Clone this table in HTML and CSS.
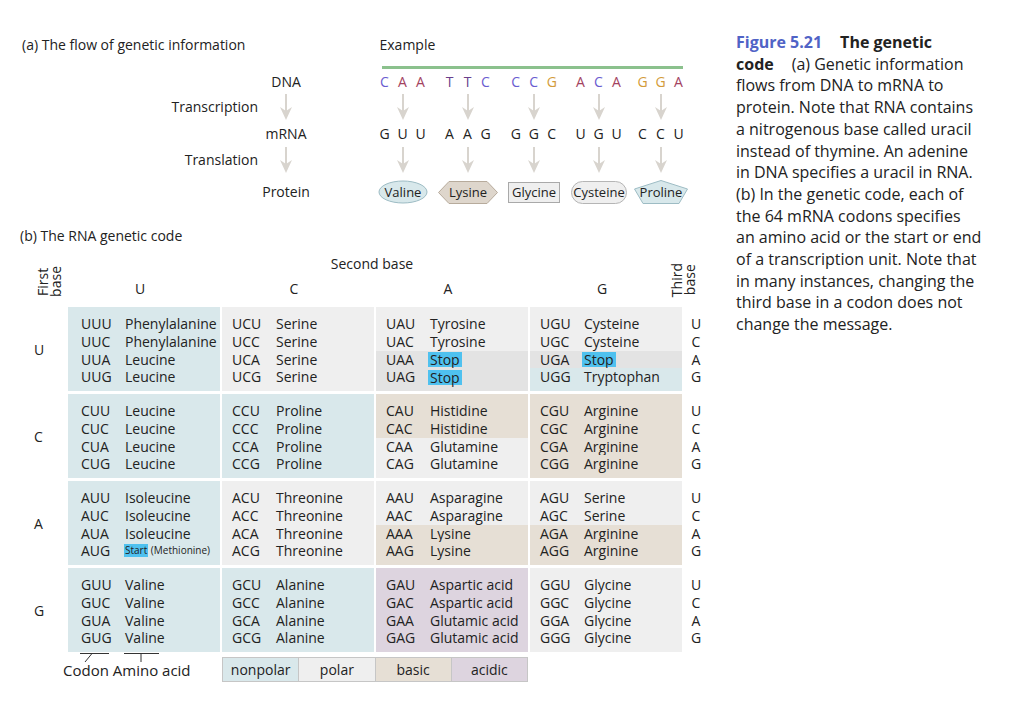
FILE: index.html
```html
<!DOCTYPE html>
<html lang="en">
<head>
<meta charset="utf-8">
<title>Figure 5.21 The genetic code</title>
<link rel="stylesheet" href="styles.css">
</head>
<body>
<div class="page">
  <div class="figure">
    <section class="flow">
      <div class="title-a">(a) The flow of genetic information</div>
      <div class="example-h">Example</div>

      <div class="sp3"></div>
      <div class="gline"></div>

      <div></div>
      <div class="nm">DNA</div>
      <div></div>
      <div class="cod"><span class="bC">C</span><span class="bA">A</span><span class="bA">A</span></div>
      <div class="cod"><span class="bT">T</span><span class="bT">T</span><span class="bC">C</span></div>
      <div class="cod"><span class="bC">C</span><span class="bC">C</span><span class="bG">G</span></div>
      <div class="cod"><span class="bA">A</span><span class="bC">C</span><span class="bA">A</span></div>
      <div class="cod"><span class="bG">G</span><span class="bG">G</span><span class="bA">A</span></div>

      <div class="lab">Transcription</div>
      <div class="arr"><svg width="14" height="26" viewBox="0 0 14 26"><path d="M7 0V18" stroke="#d8d4ce" stroke-width="2"/><path d="M1 13L7 26L13 13L7 17Z" fill="#d8d4ce"/></svg></div>
      <div></div>
      <div class="arr"><svg width="14" height="26" viewBox="0 0 14 26"><path d="M7 0V18" stroke="#d8d4ce" stroke-width="2"/><path d="M1 13L7 26L13 13L7 17Z" fill="#d8d4ce"/></svg></div>
      <div class="arr"><svg width="14" height="26" viewBox="0 0 14 26"><path d="M7 0V18" stroke="#d8d4ce" stroke-width="2"/><path d="M1 13L7 26L13 13L7 17Z" fill="#d8d4ce"/></svg></div>
      <div class="arr"><svg width="14" height="26" viewBox="0 0 14 26"><path d="M7 0V18" stroke="#d8d4ce" stroke-width="2"/><path d="M1 13L7 26L13 13L7 17Z" fill="#d8d4ce"/></svg></div>
      <div class="arr"><svg width="14" height="26" viewBox="0 0 14 26"><path d="M7 0V18" stroke="#d8d4ce" stroke-width="2"/><path d="M1 13L7 26L13 13L7 17Z" fill="#d8d4ce"/></svg></div>
      <div class="arr"><svg width="14" height="26" viewBox="0 0 14 26"><path d="M7 0V18" stroke="#d8d4ce" stroke-width="2"/><path d="M1 13L7 26L13 13L7 17Z" fill="#d8d4ce"/></svg></div>

      <div></div>
      <div class="nm">mRNA</div>
      <div></div>
      <div class="cod"><span>G</span><span>U</span><span>U</span></div>
      <div class="cod"><span>A</span><span>A</span><span>G</span></div>
      <div class="cod"><span>G</span><span>G</span><span>C</span></div>
      <div class="cod"><span>U</span><span>G</span><span>U</span></div>
      <div class="cod"><span>C</span><span>C</span><span>U</span></div>

      <div class="lab">Translation</div>
      <div class="arr"><svg width="14" height="26" viewBox="0 0 14 26"><path d="M7 0V18" stroke="#d8d4ce" stroke-width="2"/><path d="M1 13L7 26L13 13L7 17Z" fill="#d8d4ce"/></svg></div>
      <div></div>
      <div class="arr"><svg width="14" height="26" viewBox="0 0 14 26"><path d="M7 0V18" stroke="#d8d4ce" stroke-width="2"/><path d="M1 13L7 26L13 13L7 17Z" fill="#d8d4ce"/></svg></div>
      <div class="arr"><svg width="14" height="26" viewBox="0 0 14 26"><path d="M7 0V18" stroke="#d8d4ce" stroke-width="2"/><path d="M1 13L7 26L13 13L7 17Z" fill="#d8d4ce"/></svg></div>
      <div class="arr"><svg width="14" height="26" viewBox="0 0 14 26"><path d="M7 0V18" stroke="#d8d4ce" stroke-width="2"/><path d="M1 13L7 26L13 13L7 17Z" fill="#d8d4ce"/></svg></div>
      <div class="arr"><svg width="14" height="26" viewBox="0 0 14 26"><path d="M7 0V18" stroke="#d8d4ce" stroke-width="2"/><path d="M1 13L7 26L13 13L7 17Z" fill="#d8d4ce"/></svg></div>
      <div class="arr"><svg width="14" height="26" viewBox="0 0 14 26"><path d="M7 0V18" stroke="#d8d4ce" stroke-width="2"/><path d="M1 13L7 26L13 13L7 17Z" fill="#d8d4ce"/></svg></div>

      <div></div>
      <div class="nm">Protein</div>
      <div></div>
      <div class="prot"><svg width="50" height="24" viewBox="0 0 50 24"><ellipse cx="25" cy="12" rx="24" ry="11" fill="#d8e8eb" stroke="#9dbcc4"/><text x="25" y="16.5">Valine</text></svg></div>
      <div class="prot"><svg width="60" height="23" viewBox="0 0 60 23"><polygon points="0.5,11.5 11,0.5 49,0.5 59.5,11.5 49,22.5 11,22.5" fill="#ded6cc" stroke="#b7ab9c"/><text x="30" y="16">Lysine</text></svg></div>
      <div class="prot"><svg width="52" height="21" viewBox="0 0 52 21"><rect x="0.5" y="0.5" width="51" height="20" fill="#efefef" stroke="#a9a9a9"/><text x="26" y="15">Glycine</text></svg></div>
      <div class="prot"><svg width="56" height="23" viewBox="0 0 56 23"><rect x="0.5" y="0.5" width="55" height="22" rx="11" fill="#efefef" stroke="#b5b5b5"/><text x="28" y="16">Cysteine</text></svg></div>
      <div class="prot"><svg width="54" height="24" viewBox="0 0 54 24"><polygon points="27,0.5 53.5,9 45,23.5 9,23.5 0.5,9" fill="#d8e8eb" stroke="#9dbcc4"/><text x="27" y="17">Proline</text></svg></div>
    </section>

    <section class="code">
      <h2 class="title-b">(b) The RNA genetic code</h2>
      <div class="head">
        <div class="second">Second base</div>
        <div class="rot first">First<br>base</div>
        <div class="hc h1">U</div>
        <div class="hc h2">C</div>
        <div class="hc h3">A</div>
        <div class="hc h4">G</div>
        <div class="rot third">Third<br>base</div>
      </div>

      <div class="table">
        <!-- U row -->
        <div class="fb">U</div>
        <div class="cell c1">
          <div class="ln np"><span class="cd">UUU</span>Phenylalanine</div>
          <div class="ln np"><span class="cd">UUC</span>Phenylalanine</div>
          <div class="ln np"><span class="cd">UUA</span>Leucine</div>
          <div class="ln np"><span class="cd">UUG</span>Leucine</div>
        </div>
        <div class="cell">
          <div class="ln po"><span class="cd">UCU</span>Serine</div>
          <div class="ln po"><span class="cd">UCC</span>Serine</div>
          <div class="ln po"><span class="cd">UCA</span>Serine</div>
          <div class="ln po"><span class="cd">UCG</span>Serine</div>
        </div>
        <div class="cell">
          <div class="ln po"><span class="cd">UAU</span>Tyrosine</div>
          <div class="ln po"><span class="cd">UAC</span>Tyrosine</div>
          <div class="ln st"><span class="cd">UAA</span><span class="hl">Stop</span></div>
          <div class="ln st"><span class="cd">UAG</span><span class="hl">Stop</span></div>
        </div>
        <div class="cell">
          <div class="ln po"><span class="cd">UGU</span>Cysteine</div>
          <div class="ln po"><span class="cd">UGC</span>Cysteine</div>
          <div class="ln st"><span class="cd">UGA</span><span class="hl">Stop</span></div>
          <div class="ln np"><span class="cd">UGG</span>Tryptophan</div>
        </div>
        <div class="tb"><div class="ln">U</div><div class="ln">C</div><div class="ln">A</div><div class="ln">G</div></div>

        <!-- C row -->
        <div class="fb">C</div>
        <div class="cell c1">
          <div class="ln np"><span class="cd">CUU</span>Leucine</div>
          <div class="ln np"><span class="cd">CUC</span>Leucine</div>
          <div class="ln np"><span class="cd">CUA</span>Leucine</div>
          <div class="ln np"><span class="cd">CUG</span>Leucine</div>
        </div>
        <div class="cell">
          <div class="ln np"><span class="cd">CCU</span>Proline</div>
          <div class="ln np"><span class="cd">CCC</span>Proline</div>
          <div class="ln np"><span class="cd">CCA</span>Proline</div>
          <div class="ln np"><span class="cd">CCG</span>Proline</div>
        </div>
        <div class="cell">
          <div class="ln ba"><span class="cd">CAU</span>Histidine</div>
          <div class="ln ba"><span class="cd">CAC</span>Histidine</div>
          <div class="ln po"><span class="cd">CAA</span>Glutamine</div>
          <div class="ln po"><span class="cd">CAG</span>Glutamine</div>
        </div>
        <div class="cell">
          <div class="ln ba"><span class="cd">CGU</span>Arginine</div>
          <div class="ln ba"><span class="cd">CGC</span>Arginine</div>
          <div class="ln ba"><span class="cd">CGA</span>Arginine</div>
          <div class="ln ba"><span class="cd">CGG</span>Arginine</div>
        </div>
        <div class="tb"><div class="ln">U</div><div class="ln">C</div><div class="ln">A</div><div class="ln">G</div></div>

        <!-- A row -->
        <div class="fb">A</div>
        <div class="cell c1">
          <div class="ln np"><span class="cd">AUU</span>Isoleucine</div>
          <div class="ln np"><span class="cd">AUC</span>Isoleucine</div>
          <div class="ln np"><span class="cd">AUA</span>Isoleucine</div>
          <div class="ln np"><span class="cd">AUG</span><span class="sm"><span class="hl hls">Start</span> (Methionine)</span></div>
        </div>
        <div class="cell">
          <div class="ln po"><span class="cd">ACU</span>Threonine</div>
          <div class="ln po"><span class="cd">ACC</span>Threonine</div>
          <div class="ln po"><span class="cd">ACA</span>Threonine</div>
          <div class="ln po"><span class="cd">ACG</span>Threonine</div>
        </div>
        <div class="cell">
          <div class="ln po"><span class="cd">AAU</span>Asparagine</div>
          <div class="ln po"><span class="cd">AAC</span>Asparagine</div>
          <div class="ln ba"><span class="cd">AAA</span>Lysine</div>
          <div class="ln ba"><span class="cd">AAG</span>Lysine</div>
        </div>
        <div class="cell">
          <div class="ln po"><span class="cd">AGU</span>Serine</div>
          <div class="ln po"><span class="cd">AGC</span>Serine</div>
          <div class="ln ba"><span class="cd">AGA</span>Arginine</div>
          <div class="ln ba"><span class="cd">AGG</span>Arginine</div>
        </div>
        <div class="tb"><div class="ln">U</div><div class="ln">C</div><div class="ln">A</div><div class="ln">G</div></div>

        <!-- G row -->
        <div class="fb">G</div>
        <div class="cell c1">
          <div class="ln np"><span class="cd">GUU</span>Valine</div>
          <div class="ln np"><span class="cd">GUC</span>Valine</div>
          <div class="ln np"><span class="cd">GUA</span>Valine</div>
          <div class="ln np"><span class="cd">GUG</span>Valine</div>
        </div>
        <div class="cell">
          <div class="ln np"><span class="cd">GCU</span>Alanine</div>
          <div class="ln np"><span class="cd">GCC</span>Alanine</div>
          <div class="ln np"><span class="cd">GCA</span>Alanine</div>
          <div class="ln np"><span class="cd">GCG</span>Alanine</div>
        </div>
        <div class="cell">
          <div class="ln ac"><span class="cd">GAU</span>Aspartic acid</div>
          <div class="ln ac"><span class="cd">GAC</span>Aspartic acid</div>
          <div class="ln ac"><span class="cd">GAA</span>Glutamic acid</div>
          <div class="ln ac"><span class="cd">GAG</span>Glutamic acid</div>
        </div>
        <div class="cell">
          <div class="ln po"><span class="cd">GGU</span>Glycine</div>
          <div class="ln po"><span class="cd">GGC</span>Glycine</div>
          <div class="ln po"><span class="cd">GGA</span>Glycine</div>
          <div class="ln po"><span class="cd">GGG</span>Glycine</div>
        </div>
        <div class="tb"><div class="ln">U</div><div class="ln">C</div><div class="ln">A</div><div class="ln">G</div></div>

        <!-- legend row -->
        <div class="annot">
          <svg width="200" height="9" viewBox="0 0 200 9"><path d="M60 0.5H89M104 0.5H139M72 0.5L65 9M121 0.5V9" stroke="#333" stroke-width="1" fill="none"/></svg>
          <p>Codon Amino acid</p>
        </div>
        <div class="legend">
          <span class="np">nonpolar</span>
          <span class="po">polar</span>
          <span class="ba">basic</span>
          <span class="ac">acidic</span>
        </div>
      </div>
    </section>
  </div>

  <p class="caption"><b class="fig">Figure 5.21</b><span class="gap"></span><b>The genetic</b><br><b>code</b><span class="gap"></span>(a) Genetic information<br>flows from DNA to mRNA to<br>protein. Note that RNA contains<br>a nitrogenous base called uracil<br>instead of thymine. An adenine<br>in DNA specifies a uracil in RNA.<br>(b) In the genetic code, each of<br>the 64 mRNA codons specifies<br>an amino acid or the start or end<br>of a transcription unit. Note that<br>in many instances, changing the<br>third base in a codon does not<br>change the message.</p>
</div>
</body>
</html>
```

FILE: styles.css
```css
* { box-sizing: border-box; margin: 0; padding: 0; }

body {
  margin: 0;
  width: 1024px;
  height: 704px;
  overflow: hidden;
  background: #ffffff;
  font-family: "Open Sans", "Noto Sans", sans-serif;
  color: #222222;
}

.page {
  display: flex;
  align-items: flex-start;
}

.figure {
  width: 736px;
  flex: none;
  padding-top: 34px;
}

/* ---------- (a) flow ---------- */
.flow {
  display: grid;
  grid-template-columns: 262px 48px 60.5px 64px 66px 66.5px 63px 61px;
  grid-template-rows: 22px 16px 20px 30px 24px 28px 36px;
  font-size: 14px;
  line-height: 20px;
}

.title-a {
  grid-column: span 3;
  padding-left: 22px;
  line-height: 22px;
  white-space: nowrap;
}

.example-h {
  grid-column: span 5;
  padding-left: 9px;
  line-height: 22px;
}

.sp3 { grid-column: span 3; }

.gline {
  grid-column: span 5;
  height: 3px;
  margin: 10px 8px 0 11px;
  background: #8bc18d;
}

.nm {
  text-align: center;
  align-self: center;
}

.lab {
  text-align: right;
  padding-right: 4px;
  align-self: center;
  white-space: nowrap;
}

.cod {
  display: flex;
  justify-content: center;
  align-self: center;
}

.cod span {
  width: 18px;
  text-align: center;
}

.bC { color: #6a5cd0; }
.bA { color: #a3425f; }
.bT { color: #6a3f8c; }
.bG { color: #d39b3a; }

.arr,
.prot {
  display: flex;
  justify-content: center;
  align-items: center;
}

.arr svg,
.prot svg { display: block; }

.prot text {
  font-family: "Open Sans", "Noto Sans", sans-serif;
  font-size: 13px;
  fill: #222222;
  text-anchor: middle;
}

/* ---------- (b) code ---------- */
.code {
  padding-left: 20px;
  margin-top: 16px;
}

.title-b {
  font-size: 14px;
  font-weight: 400;
  line-height: 20px;
}

.head {
  display: grid;
  grid-template-columns: 46px repeat(4, 152px) 24px;
  grid-template-rows: 20px 33px;
  column-gap: 2px;
  margin-top: 8px;
  font-size: 14px;
}

.second {
  grid-row: 1;
  grid-column: 2 / 6;
  text-align: center;
  line-height: 20px;
  padding-right: 6px;
}

.rot {
  grid-row: 1 / 3;
  writing-mode: vertical-rl;
  transform: rotate(180deg);
  line-height: 13px;
  text-align: center;
  align-self: end;
  margin-bottom: 10px;
}

.first {
  grid-column: 1;
  justify-self: start;
  margin-left: 16px;
}

.third {
  grid-column: 5 / 7;
  justify-self: end;
  margin-right: 12px;
}

.hc {
  grid-row: 2;
  text-align: center;
  line-height: 30px;
  padding-right: 8px;
}
.h1 { grid-column: 2; }
.h2 { grid-column: 3; }
.h3 { grid-column: 4; }
.h4 { grid-column: 5; }

.table {
  display: grid;
  grid-template-columns: 46px repeat(4, 152px) 24px;
  column-gap: 2px;
  row-gap: 3px;
  font-size: 14px;
}

.fb {
  display: flex;
  align-items: center;
  padding-left: 14px;
}

.cell,
.tb {
  display: flex;
  flex-direction: column;
}

.ln {
  display: flex;
  align-items: center;
  height: 17.75px;
  line-height: 17.75px;
  padding-left: 10px;
  white-space: nowrap;
}

.ln:first-child {
  height: 25.75px;
  padding-top: 8px;
}

.ln:last-child {
  height: 22.75px;
  padding-bottom: 5px;
}

.c1 .ln { padding-left: 13px; }

.tb .ln {
  justify-content: center;
  padding-left: 0;
}

.cd {
  flex: none;
  width: 44px;
}

.hl {
  display: inline-block;
  background: #4fc1ef;
  line-height: 15px;
  padding: 0 2px;
  margin-left: -2px;
}

.sm {
  font-size: 10px;
}

.hls {
  line-height: 13px;
  padding: 0 1px;
  margin-left: -1px;
}

.np { background: #d9e8eb; }
.po { background: #efefef; }
.ba { background: #e6dfd5; }
.ac { background: #ddd4df; }
.st { background: #e3e3e3; }

.annot {
  grid-column: 1 / 3;
  margin-top: -2px;
  font-size: 15px;
}

.annot svg { display: block; }

.annot p {
  padding-left: 43px;
  line-height: 16px;
  white-space: nowrap;
}

.legend {
  grid-column: 3 / 5;
  display: flex;
  height: 25px;
  margin-top: 2px;
  border: 1px solid #c6c6c6;
  font-size: 14px;
}

.legend span {
  flex: 1;
  text-align: center;
  line-height: 23px;
  border-left: 1px solid #c6c6c6;
}

.legend span:first-child { border-left: 0; }

/* ---------- caption ---------- */
.caption {
  margin-top: 32px;
  font-size: 16px;
  line-height: 21.7px;
  white-space: nowrap;
  color: #222222;
}

.caption b { font-weight: 700; }
.caption .fig { color: #5063c6; }

.gap {
  display: inline-block;
  width: 18px;
}
```
